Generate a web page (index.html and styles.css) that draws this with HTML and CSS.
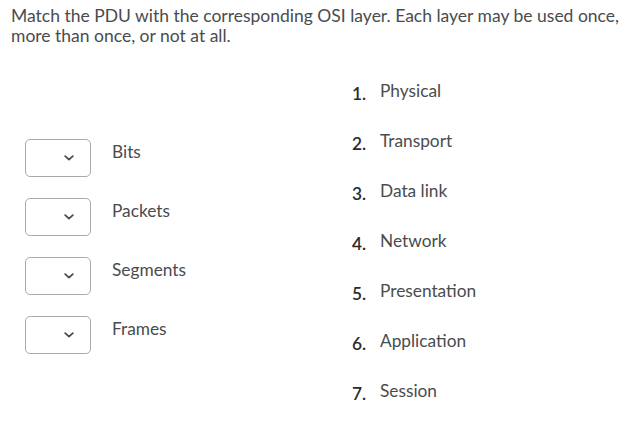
FILE: index.html
```html
<!DOCTYPE html>
<html lang="en">
<head>
    <meta charset="UTF-8">
    <meta name="viewport" content="width=device-width, initial-scale=1.0">
    <title>Matching Question</title>
    <link rel="stylesheet" href="styles.css">
</head>
<body>
    <div class="question">
        <p class="prompt">Match the PDU with the corresponding OSI layer. Each layer may be used once, more than once, or not at all.</p>
        <div class="match">
            <div class="choices">
                <div class="choice">
                    <div class="picker"><svg width="10" height="6" viewBox="0 0 10 6"><path d="M1.2 1.2 5 4.6 8.8 1.2" /></svg></div>
                    <span class="choice-label">Bits</span>
                </div>
                <div class="choice">
                    <div class="picker"><svg width="10" height="6" viewBox="0 0 10 6"><path d="M1.2 1.2 5 4.6 8.8 1.2" /></svg></div>
                    <span class="choice-label">Packets</span>
                </div>
                <div class="choice">
                    <div class="picker"><svg width="10" height="6" viewBox="0 0 10 6"><path d="M1.2 1.2 5 4.6 8.8 1.2" /></svg></div>
                    <span class="choice-label">Segments</span>
                </div>
                <div class="choice">
                    <div class="picker"><svg width="10" height="6" viewBox="0 0 10 6"><path d="M1.2 1.2 5 4.6 8.8 1.2" /></svg></div>
                    <span class="choice-label">Frames</span>
                </div>
            </div>
            <ol class="layers">
                <li><span class="num">1.</span><span>Physical</span></li>
                <li><span class="num">2.</span><span>Transport</span></li>
                <li><span class="num">3.</span><span>Data link</span></li>
                <li><span class="num">4.</span><span>Network</span></li>
                <li><span class="num">5.</span><span>Presentation</span></li>
                <li><span class="num">6.</span><span>Application</span></li>
                <li><span class="num">7.</span><span>Session</span></li>
            </ol>
        </div>
    </div>
</body>
</html>
```

FILE: styles.css
```css
body {
    margin: 0;
    font-family: Lato, "Open Sans", sans-serif;
    font-size: 17.3px;
    line-height: 20px;
    color: #494c4e;
    background: #fff;
}

.question {
    padding: 6px 8px 6px 11px;
}

.prompt {
    margin: 0;
    font-size: 17.5px;
}

.match {
    display: flex;
    margin-top: 35px;
}

.choices {
    flex: 0 0 341px;
    box-sizing: border-box;
    padding: 58px 0 0 14px;
}

.choice {
    display: flex;
    align-items: flex-start;
    gap: 21px;
    margin-bottom: 21px;
}

.picker {
    width: 66px;
    height: 38px;
    box-sizing: border-box;
    border: 1px solid #a8abae;
    border-radius: 5px;
    display: flex;
    align-items: center;
    justify-content: flex-end;
    padding-right: 16px;
}

.picker svg {
    fill: none;
    stroke: #494c4e;
    stroke-width: 1.8;
    stroke-linecap: round;
    stroke-linejoin: round;
}

.choice-label {
    margin-top: 3px;
}

.layers {
    list-style: none;
    margin: 0;
    padding: 0;
}

.layers li {
    display: flex;
    height: 50px;
}

.num {
    width: 28px;
    padding-top: 3px;
    font-weight: 600;
    color: #2a2b2c;
}
```
